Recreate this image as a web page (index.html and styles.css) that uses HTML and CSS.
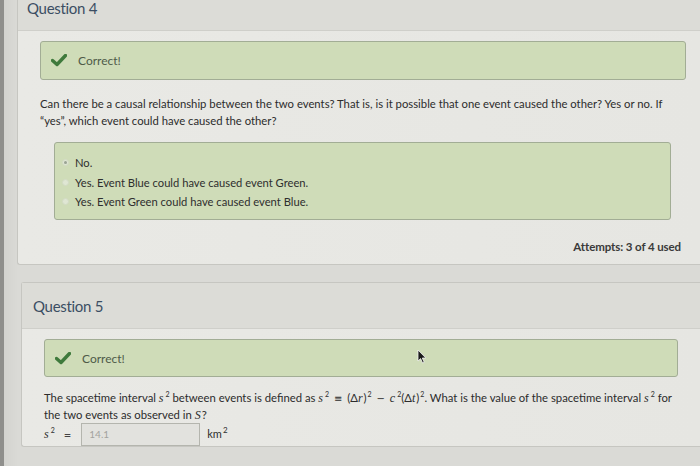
FILE: index.html
```html
<!DOCTYPE html>
<html>
<head>
<meta charset="utf-8">
<link rel="stylesheet" href="styles.css">
</head>
<body>
<div class="page">
  <section class="card card4">
    <header class="card-head head4"><h2 class="q-title">Question 4</h2></header>
    <div class="card-body body4">
      <div class="correct">
        <svg class="check" width="16" height="13" viewBox="0 0 16 13"><path d="M1.5 6.5 L6 10.5 L14.5 1.5" fill="none" stroke="#3f7a3c" stroke-width="3.4" stroke-linecap="round" stroke-linejoin="round"/></svg>
        <span class="correct-text">Correct!</span>
      </div>
      <p class="qtext q4text">Can there be a causal relationship between the two events? That is, is it possible that one event caused the other? Yes or no. If “yes”, which event could have caused the other?</p>
      <div class="answers">
        <div class="ans"><span class="radio sel"></span><span>No.</span></div>
        <div class="ans"><span class="radio"></span><span>Yes. Event Blue could have caused event Green.</span></div>
        <div class="ans"><span class="radio"></span><span>Yes. Event Green could have caused event Blue.</span></div>
      </div>
      <div class="attempts">Attempts: 3 of 4 used</div>
    </div>
  </section>

  <section class="card card5">
    <header class="card-head head5"><h2 class="q-title">Question 5</h2></header>
    <div class="card-body body5">
      <div class="correct correct5">
        <svg class="check" width="16" height="13" viewBox="0 0 16 13"><path d="M1.5 6.5 L6 10.5 L14.5 1.5" fill="none" stroke="#3f7a3c" stroke-width="3.4" stroke-linecap="round" stroke-linejoin="round"/></svg>
        <span class="correct-text">Correct!</span>
        <svg class="cursor" width="10" height="15" viewBox="0 0 10 15"><path d="M1 1 L1 12 L3.6 9.6 L5.6 14 L7.2 13.3 L5.3 9 L8.8 9 Z" fill="#1a1a1a" stroke="#f2f2f2" stroke-width="0.8"/></svg>
      </div>
      <p class="qtext q5text">The spacetime interval <i class="m">s</i><sup>2</sup> between events is defined as <i class="m">s</i><sup>2</sup> <span class="op">≡</span> (Δ<i class="m">r</i>)<sup>2</sup> <span class="op">−</span> <i class="m">c</i><sup>2</sup>(Δ<i class="m">t</i>)<sup>2</sup>. What is the value of the spacetime interval <i class="m">s</i><sup>2</sup> for the two events as observed in <i class="m">S</i>?</p>
      <div class="answer-row">
        <span class="lhs"><i class="m">s</i><sup>2</sup></span>
        <span class="eq">=</span>
        <span class="input">14.1</span>
        <span class="unit">km<sup>2</sup></span>
      </div>
    </div>
  </section>
</div>
</body>
</html>
```
FILE: styles.css
```css
html, body {
  margin: 0;
  padding: 0;
}
body {
  width: 700px;
  height: 466px;
  overflow: hidden;
  background: #d9d9d5;
  font-family: Lato, "Open Sans", sans-serif;
  color: #2e2e2e;
}
.page {
  height: 466px;
  border-left: 4px solid #8f8f8c;
  background: linear-gradient(90deg, #d3d3cf 0px, #dadad6 14px);
  overflow: hidden;
}
.card {
  background: linear-gradient(90deg, #e9e9e5 0%, #e6e6e2 100%);
  border: 1px solid #c6c6c1;
  border-right: none;
  border-radius: 3px 0 0 3px;
}
.card4 {
  margin-left: 13px;
  border-top: none;
  border-radius: 0 0 0 3px;
}
.card5 {
  margin-left: 17px;
  margin-top: 17px;
}
.card-head {
  background: #dcdcd7;
  border-bottom: 1px solid #cfcfca;
}
.head4 {
  height: 30px;
  padding-left: 9px;
}
.head5 {
  height: 45px;
  padding-left: 11px;
  display: flex;
  align-items: center;
}
.q-title {
  margin: 0;
  font-weight: normal;
  font-size: 15px;
  color: #3b4e63;
  letter-spacing: -0.3px;
}
.head4 .q-title {
  line-height: 16px;
  margin-top: 0;
}
.card-body {
  padding-top: 10px;
}
.body4 {
  padding-left: 22px;
  padding-right: 14px;
  height: 223px;
}
.body5 {
  padding-left: 22px;
  padding-right: 22px;
}
.correct {
  height: 37px;
  background: #cfdcb8;
  border: 1px solid #a2ad95;
  border-radius: 3px;
  display: flex;
  align-items: center;
  padding-left: 10px;
  position: relative;
}
.correct5 {
  height: 36px;
}
.check {
  display: block;
}
.correct-text {
  margin-left: 11px;
  font-size: 12px;
  color: #4e5a48;
}
.cursor {
  position: absolute;
  left: 372px;
  top: 9px;
}
.qtext {
  margin: 0;
  font-size: 11.3px;
  line-height: 17px;
  color: #2c2c2c;
}
.q4text {
  margin-top: 15px;
  padding-right: 10px;
}
.q5text {
  margin-top: 13px;
  line-height: 16px;
  padding-right: 4px;
}
.m {
  font-family: "Liberation Serif", "Times New Roman", serif;
  font-size: 12px;
  padding-right: 1px;
}
sup {
  font-size: 7px;
  line-height: 0;
  vertical-align: 5px;
  margin-left: 1px;
}
.op {
  font-family: "DejaVu Sans", sans-serif;
  font-size: 10px;
  padding: 0 2px;
}
.answers {
  margin-top: 13px;
  margin-left: 14px;
  margin-right: 15px;
  height: 57px;
  padding: 10px 0 9px 7px;
  background: #cfdcb8;
  border: 1px solid #a2ad95;
  border-radius: 3px;
}
.ans {
  display: flex;
  align-items: center;
  height: 19.5px;
  font-size: 11.2px;
  color: #2e2e2e;
}
.radio {
  width: 7px;
  height: 7px;
  border-radius: 50%;
  background: #dfe6d3;
  border: 1px solid #d2dbc4;
  margin-right: 6px;
  box-sizing: border-box;
  display: flex;
  align-items: center;
  justify-content: center;
}
.radio.sel::after {
  content: "";
  width: 3px;
  height: 3px;
  border-radius: 50%;
  background: #9aa394;
}
.attempts {
  margin-top: 20px;
  text-align: right;
  font-size: 11.5px;
  font-weight: bold;
  color: #3a3a3a;
  letter-spacing: -0.1px;
  padding-right: 5px;
}
.answer-row {
  display: flex;
  align-items: center;
  margin-top: 0;
  height: 23px;
  font-size: 11.3px;
}
.lhs .m {
  font-size: 12px;
}
.eq {
  margin-left: 9px;
  font-size: 13px;
  color: #444;
}
.input {
  margin-left: 10px;
  width: 110px;
  height: 21px;
  line-height: 21px;
  padding-left: 7px;
  background: #e2e2de;
  border: 1px solid #b4b5ae;
  font-size: 10px;
  color: #a3a39e;
}
.unit {
  margin-left: 7px;
  font-size: 11px;
  margin-top: -3px;
}
.unit sup {
  font-size: 8px;
}
```
